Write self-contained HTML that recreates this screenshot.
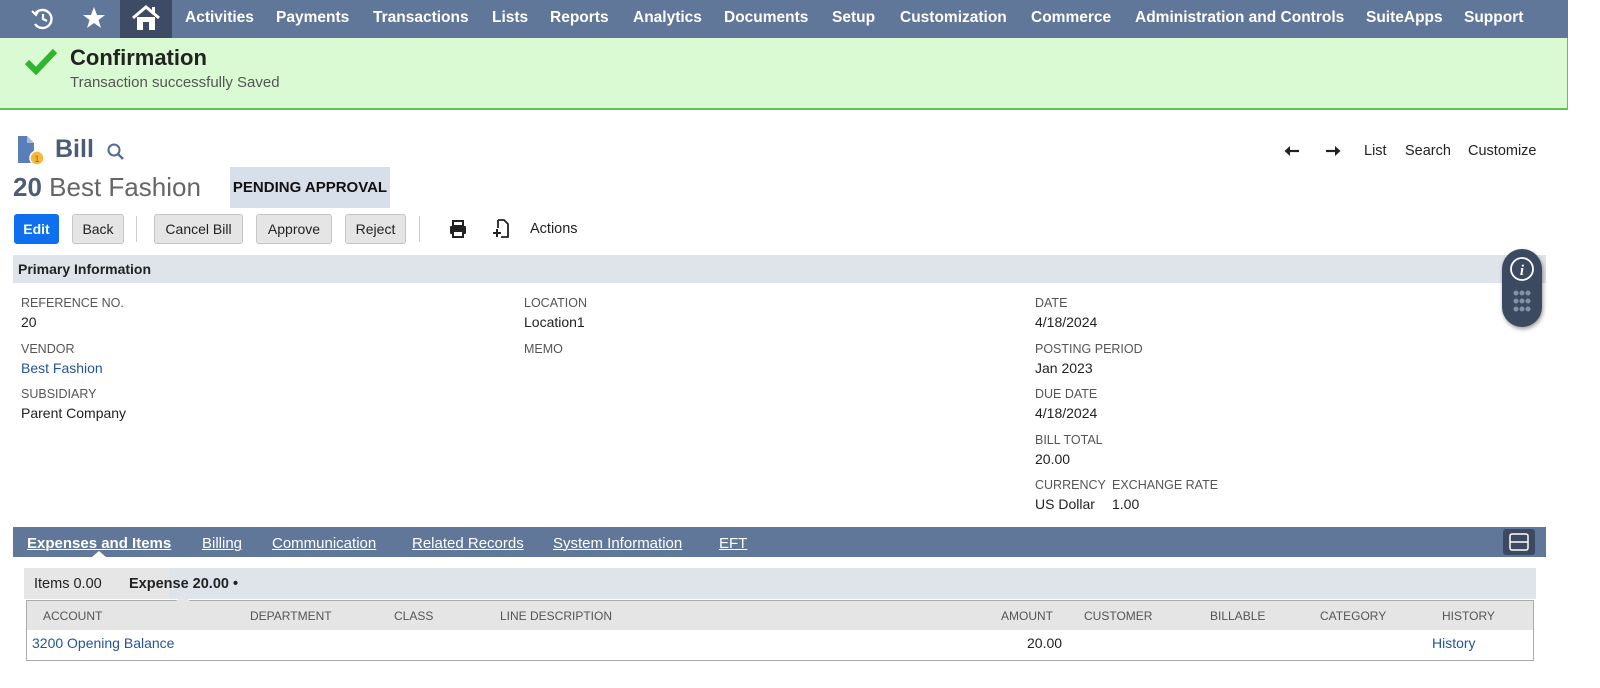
<!DOCTYPE html>
<html><head><meta charset="utf-8"><style>
*{margin:0;padding:0;box-sizing:border-box}
body{width:1600px;height:688px;overflow:hidden;background:#fff;font-family:"Liberation Sans",sans-serif;color:#222;position:relative}
.a{position:absolute;white-space:nowrap}
.nav{position:absolute;left:0;top:0;width:1568px;height:38px;background:#607799}
.nav .a{color:#fff;font-size:15.5px;font-weight:bold;top:9px}
.lbl{font-size:12.5px;color:#555;text-transform:uppercase}
.val{font-size:14px;color:#222}
.lnk{color:#255599}
.btn{position:absolute;top:214px;height:30px;background:#e5e5e5;border:1px solid #c5c5c5;border-radius:3px;font-size:14px;text-align:center;line-height:28px;color:#222}
.tab{color:#fff;font-size:15px;top:535px;text-decoration:underline;text-decoration-thickness:1px}
.th{font-size:12px;color:#555;top:609px}
</style></head><body>
<div class="nav">
<div style="position:absolute;left:120px;top:0;width:52px;height:38px;background:#3d4b64"></div>
<svg class="a" style="left:30px;top:6px" width="26" height="26" viewBox="0 0 26 26"><path d="M5 8 A9 9 0 1 1 5 18" fill="none" stroke="#fff" stroke-width="2.4"/><path d="M2 5 L6 9 L9 4" fill="none" stroke="#fff" stroke-width="2"/><path d="M13 8 V13 L17 15" fill="none" stroke="#fff" stroke-width="2.2"/></svg>
<svg class="a" style="left:82px;top:6px" width="24" height="24" viewBox="0 0 24 24"><path d="M12 1 L15 9 L23 9 L16.5 14 L19 22 L12 17 L5 22 L7.5 14 L1 9 L9 9Z" fill="#fff"/></svg>
<svg class="a" style="left:131px;top:4px" width="30" height="28" viewBox="0 0 30 28"><path d="M2 14 L15 3 L28 14" fill="none" stroke="#fff" stroke-width="3"/><path d="M6 13 V26 H12 V18 H18 V26 H24 V13" fill="#fff"/><rect x="21" y="3" width="3" height="7" fill="#fff"/></svg>
<span class="a" style="left:185px">Activities</span>
<span class="a" style="left:276px">Payments</span>
<span class="a" style="left:373px">Transactions</span>
<span class="a" style="left:492px">Lists</span>
<span class="a" style="left:550px">Reports</span>
<span class="a" style="left:633px">Analytics</span>
<span class="a" style="left:724px">Documents</span>
<span class="a" style="left:832px">Setup</span>
<span class="a" style="left:900px">Customization</span>
<span class="a" style="left:1031px">Commerce</span>
<span class="a" style="left:1135px">Administration and Controls</span>
<span class="a" style="left:1366px">SuiteApps</span>
<span class="a" style="left:1464px">Support</span>
</div>
<div class="a" style="left:0;top:38px;width:1568px;height:72px;background:#d9fad3;border-bottom:2px solid #62c15a;border-right:1px solid #62c15a"></div>
<svg class="a" style="left:24px;top:47px" width="34" height="28" viewBox="0 0 34 28"><path d="M3 15 L12 24 L31 4" fill="none" stroke="#2fb52f" stroke-width="6"/></svg>
<span class="a" style="left:70px;top:45px;font-size:22px;font-weight:bold;color:#222">Confirmation</span>
<span class="a" style="left:70px;top:74px;font-size:15px;color:#555">Transaction successfully Saved</span>

<svg class="a" style="left:16px;top:135px" width="30" height="32" viewBox="0 0 30 32"><path d="M2 1 H11 L18 8 V28 H2Z" fill="#5a7fb8"/><path d="M11 1 V8 H18" fill="#a8bcdc"/><circle cx="21" cy="23" r="7" fill="#f4b73a" stroke="#fff" stroke-width="1.5"/><text x="21" y="27" font-size="9" text-anchor="middle" fill="#a06a00" font-family="Liberation Sans">1</text></svg>
<span class="a" style="left:55px;top:135px;font-size:25px;font-weight:bold;color:#4d5c77">Bill</span>
<svg class="a" style="left:106px;top:142px" width="20" height="20" viewBox="0 0 20 20"><circle cx="8" cy="8" r="5.5" fill="none" stroke="#4d6d9a" stroke-width="2"/><path d="M12 12 L17 17" stroke="#4d6d9a" stroke-width="2.4"/></svg>
<span class="a" style="left:13px;top:172px;font-size:26px"><b style="color:#4d5c77">20</b> <span style="color:#666">Best Fashion</span></span>
<div class="a" style="left:230px;top:167px;width:160px;height:41px;background:#d6dfea;font-size:15px;font-weight:bold;line-height:41px;text-align:center;color:#111">PENDING APPROVAL</div>

<svg class="a" style="left:1283px;top:144px" width="17" height="14" viewBox="0 0 17 14"><path d="M16 7 H3" stroke="#222" stroke-width="2.2"/><path d="M7 2 L1.5 7 L7 12Z" fill="#222"/></svg>
<svg class="a" style="left:1325px;top:144px" width="17" height="14" viewBox="0 0 17 14"><path d="M1 7 H14" stroke="#222" stroke-width="2.2"/><path d="M10 2 L15.5 7 L10 12Z" fill="#222"/></svg>
<span class="a" style="left:1364px;top:143px;font-size:14.5px">List</span>
<span class="a" style="left:1405px;top:143px;font-size:14.5px">Search</span>
<span class="a" style="left:1468px;top:143px;font-size:14.5px">Customize</span>

<div class="btn" style="left:14px;width:45px;background:#0f6fee;border-color:#0f6fee;color:#fff;font-weight:bold">Edit</div>
<div class="btn" style="left:72px;width:52px">Back</div>
<div class="a" style="left:136px;top:216px;width:1px;height:26px;background:#ccc"></div>
<div class="btn" style="left:154px;width:89px">Cancel Bill</div>
<div class="btn" style="left:256px;width:76px">Approve</div>
<div class="btn" style="left:345px;width:61px">Reject</div>
<div class="a" style="left:419px;top:216px;width:1px;height:26px;background:#ccc"></div>
<svg class="a" style="left:449px;top:219px" width="18" height="20" viewBox="0 0 18 20"><rect x="4" y="2" width="10" height="5" fill="none" stroke="#222" stroke-width="2"/><rect x="1" y="7" width="16" height="8" rx="1" fill="#222"/><rect x="4" y="12" width="10" height="6" fill="#fff" stroke="#222" stroke-width="2"/></svg>
<svg class="a" style="left:491px;top:218px" width="20" height="22" viewBox="0 0 20 22"><path d="M7 2 H13 L17 6 V19 H10" fill="none" stroke="#222" stroke-width="1.8"/><path d="M7 2 V10" stroke="#222" stroke-width="1.8"/><path d="M2 15 H10 M6 11 V19" stroke="#222" stroke-width="2"/></svg>
<span class="a" style="left:530px;top:221px;font-size:14.5px">Actions</span>

<div class="a" style="left:13px;top:255px;width:1533px;height:28px;background:#dfe4eb"></div>
<span class="a" style="left:18px;top:261px;font-size:14px;font-weight:bold">Primary Information</span>

<div class="a" style="left:1502px;top:249px;width:40px;height:78px;border-radius:20px;background:#3c4a61;box-shadow:1px 2px 4px rgba(0,0,0,.4)"></div>
<svg class="a" style="left:1508px;top:255px" width="28" height="66" viewBox="0 0 28 66"><circle cx="14" cy="14" r="11" fill="none" stroke="#fff" stroke-width="1.8"/><text x="14" y="20" font-size="15" font-style="italic" font-weight="bold" text-anchor="middle" fill="#fff" font-family="Liberation Serif">i</text><g fill="#8592a6"><circle cx="8" cy="38" r="2.5"/><circle cx="14" cy="38" r="2.5"/><circle cx="20" cy="38" r="2.5"/><circle cx="8" cy="46" r="2.5"/><circle cx="14" cy="46" r="2.5"/><circle cx="20" cy="46" r="2.5"/><circle cx="8" cy="54" r="2.5"/><circle cx="14" cy="54" r="2.5"/><circle cx="20" cy="54" r="2.5"/></g></svg>

<span class="a lbl" style="left:21px;top:296px">Reference No.</span><span class="a val" style="left:21px;top:314px">20</span>
<span class="a lbl" style="left:21px;top:342px">Vendor</span><span class="a val lnk" style="left:21px;top:360px">Best Fashion</span>
<span class="a lbl" style="left:21px;top:387px">Subsidiary</span><span class="a val" style="left:21px;top:405px">Parent Company</span>
<span class="a lbl" style="left:524px;top:296px">Location</span><span class="a val" style="left:524px;top:314px">Location1</span>
<span class="a lbl" style="left:524px;top:342px">Memo</span>
<span class="a lbl" style="left:1035px;top:296px">Date</span><span class="a val" style="left:1035px;top:314px">4/18/2024</span>
<span class="a lbl" style="left:1035px;top:342px">Posting Period</span><span class="a val" style="left:1035px;top:360px">Jan 2023</span>
<span class="a lbl" style="left:1035px;top:387px">Due Date</span><span class="a val" style="left:1035px;top:405px">4/18/2024</span>
<span class="a lbl" style="left:1035px;top:433px">Bill Total</span><span class="a val" style="left:1035px;top:451px">20.00</span>
<span class="a lbl" style="left:1035px;top:478px">Currency</span><span class="a val" style="left:1035px;top:496px">US Dollar</span>
<span class="a lbl" style="left:1112px;top:478px">Exchange Rate</span><span class="a val" style="left:1112px;top:496px">1.00</span>

<div class="a" style="left:13px;top:527px;width:1533px;height:30px;background:#607799"></div>
<div class="a" style="left:92px;top:551px;width:0;height:0;border-left:7px solid transparent;border-right:7px solid transparent;border-bottom:6px solid #fff"></div>
<span class="a tab" style="left:27px;font-weight:bold">Expenses and Items</span>
<span class="a tab" style="left:202px">Billing</span>
<span class="a tab" style="left:272px">Communication</span>
<span class="a tab" style="left:412px">Related Records</span>
<span class="a tab" style="left:553px">System Information</span>
<span class="a tab" style="left:719px">EFT</span>
<div class="a" style="left:1503px;top:529px;width:32px;height:26px;background:#3c4a61;border-radius:3px"></div>
<svg class="a" style="left:1509px;top:533px" width="20" height="18" viewBox="0 0 20 18"><rect x="1" y="1" width="18" height="16" rx="2" fill="none" stroke="#fff" stroke-width="1.5"/><path d="M1 9 H19" stroke="#fff" stroke-width="1.5"/></svg>

<div class="a" style="left:24px;top:568px;width:1512px;height:31px;background:#dfe4eb"></div>
<div class="a" style="left:24px;top:568px;width:145px;height:31px;background:#e6e6e6"></div>
<span class="a" style="left:34px;top:576px;font-size:14.5px">Items 0.00</span>
<span class="a" style="left:129px;top:576px;font-size:14.5px;font-weight:bold;color:#222">Expense 20.00 •</span>
<div class="a" style="left:26px;top:600px;width:1508px;height:61px;border:1px solid #aaa;background:#fff"></div>
<div class="a" style="left:27px;top:601px;width:1506px;height:29px;background:#e5e5e5"></div>
<div class="a" style="left:176px;top:595px;width:0;height:0;border-left:7px solid transparent;border-right:7px solid transparent;border-bottom:6px solid #e5e5e5"></div>
<span class="a th" style="left:43px">ACCOUNT</span>
<span class="a th" style="left:250px">DEPARTMENT</span>
<span class="a th" style="left:394px">CLASS</span>
<span class="a th" style="left:500px">LINE DESCRIPTION</span>
<span class="a th" style="left:1001px">AMOUNT</span>
<span class="a th" style="left:1084px">CUSTOMER</span>
<span class="a th" style="left:1210px">BILLABLE</span>
<span class="a th" style="left:1320px">CATEGORY</span>
<span class="a th" style="left:1442px">HISTORY</span>
<span class="a val lnk" style="left:32px;top:635px">3200 Opening Balance</span>
<span class="a val" style="left:1027px;top:635px">20.00</span>
<span class="a val lnk" style="left:1432px;top:635px">History</span>
</body></html>
